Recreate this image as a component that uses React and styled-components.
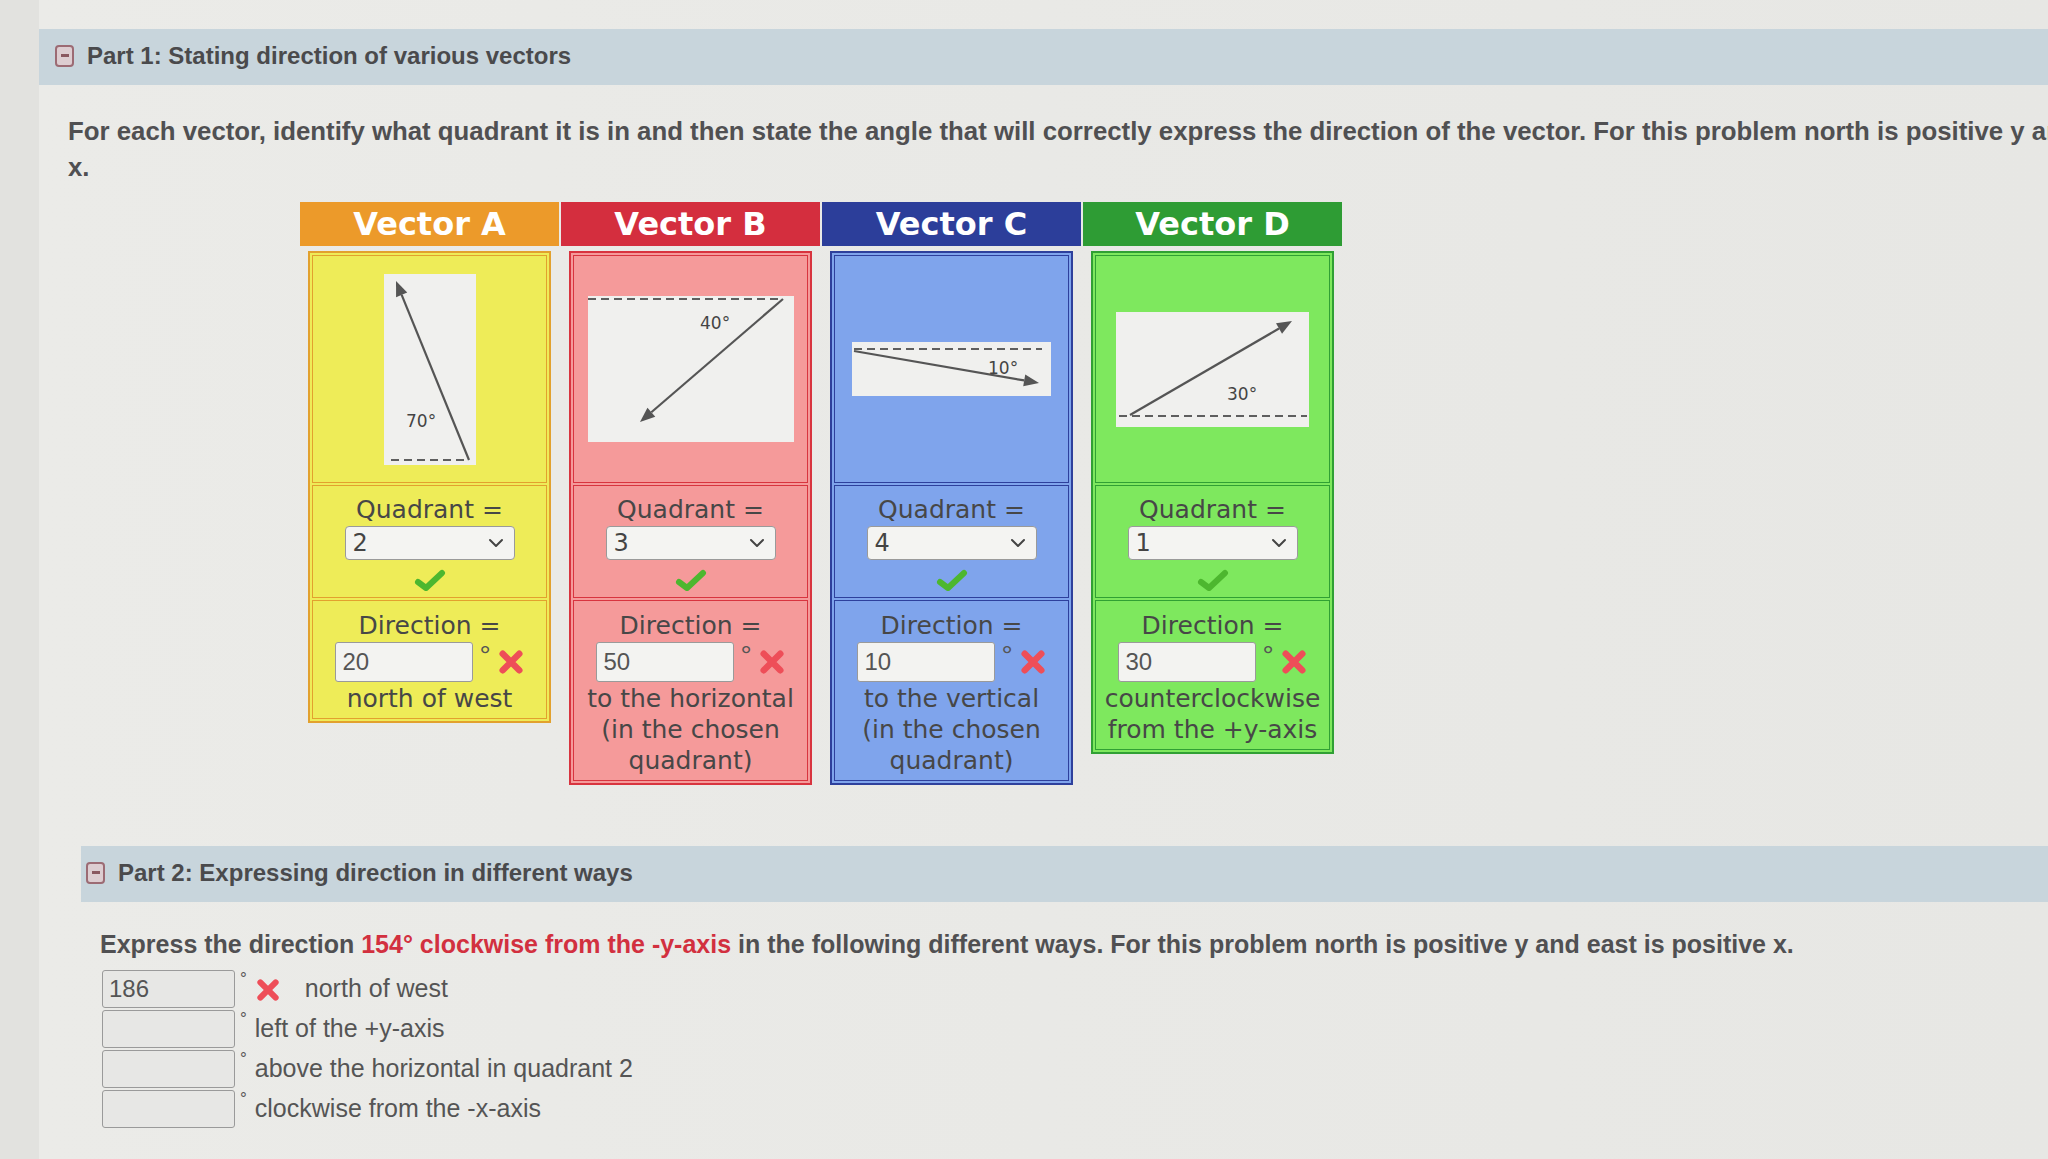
import React from 'react';
import styled, { createGlobalStyle } from 'styled-components';

const GlobalStyle = createGlobalStyle`
  html, body {
    margin: 0;
    padding: 0;
    overflow: hidden;
    background: #e8e8e5;
  }
  body {
    width: 2048px;
    height: 1159px;
    font-family: "Liberation Sans", Arial, sans-serif;
  }
`;

const vectors = [
  {
    name: 'Vector A', head: '#ec9a2a', border: '#e2a12e', fill: '#eeec58',
    pic: { w: 92, h: 191, dash: [7, 186, 85, 186], from: [85, 186], to: [12, 7], label: '70°', lx: 22, ly: 153 },
    quadrant: '2', dir: '20', text: ['north of west'],
  },
  {
    name: 'Vector B', head: '#d42e3e', border: '#d8343f', fill: '#f59a9a',
    pic: { w: 206, h: 146, dash: [0, 3, 195, 3], from: [195, 3], to: [52, 126], label: '40°', lx: 112, ly: 33 },
    quadrant: '3', dir: '50', text: ['to the horizontal', '(in the chosen', 'quadrant)'],
  },
  {
    name: 'Vector C', head: '#2c3e9a', border: '#2e409c', fill: '#7fa4ec',
    pic: { w: 199, h: 54, dash: [2, 7, 190, 7], from: [2, 9], to: [187, 41], label: '10°', lx: 136, ly: 32 },
    quadrant: '4', dir: '10', text: ['to the vertical', '(in the chosen', 'quadrant)'],
  },
  {
    name: 'Vector D', head: '#2e9c34', border: '#30a034', fill: '#7ee85e',
    pic: { w: 193, h: 115, dash: [3, 104, 191, 104], from: [14, 103], to: [176, 9], label: '30°', lx: 111, ly: 88 },
    quadrant: '1', dir: '30', text: ['counterclockwise', 'from the +y-axis'],
  },
];

const part2Rows = [
  { value: '186', wrong: true, label: 'north of west' },
  { value: '', label: 'left of the +y-axis' },
  { value: '', label: 'above the horizontal in quadrant 2' },
  { value: '', label: 'clockwise from the -x-axis' },
];

const Page = styled.div`
  box-sizing: border-box;
  height: 1159px;
  padding: 29px 0 0 39px;
  background: linear-gradient(to right, #e2e2df 0, #e2e2df 39px, #ebebe8 39px, #e7e7e4 100%);
`;

const PartHeader = styled.div`
  display: flex;
  align-items: center;
  gap: 13px;
  height: 56px;
  padding-left: ${p => p.$indent}px;
  padding-bottom: 3px;
  box-sizing: border-box;
  background: #c8d5dc;
  color: #4a4a4c;
  font-weight: bold;
  font-size: 24px;
  white-space: nowrap;
`;

const Toggle = styled.span`
  box-sizing: border-box;
  width: 19px;
  height: 22px;
  border: 2px solid #9c6b74;
  border-radius: 4px;
  background: #ddcdd1;
  display: flex;
  align-items: center;
  justify-content: center;
  &::after {
    content: "";
    width: 8px;
    height: 3px;
    background: #8a5860;
  }
`;

const Intro = styled.p`
  margin: 28px 0 0;
  padding-left: 29px;
  font-size: 25.8px;
  font-weight: bold;
  line-height: 36px;
  color: #505052;
  white-space: nowrap;
`;

const Table = styled.div`
  display: flex;
  align-items: flex-start;
  gap: 2px;
  margin: 17px 0 0 261px;
`;

const Column = styled.div`
  width: 259px;
  display: flex;
  flex-direction: column;
  align-items: center;
`;

const ColHead = styled.div`
  align-self: stretch;
  height: 44px;
  background: ${p => p.$color};
  color: #ffffff;
  font-family: "DejaVu Sans", Verdana, sans-serif;
  font-weight: bold;
  font-size: 32px;
  display: flex;
  align-items: center;
  justify-content: center;
`;

const Panel = styled.div`
  box-sizing: border-box;
  width: 243px;
  margin-top: 5px;
  border: 2px solid ${p => p.$border};
  background: ${p => p.$fill};
  padding: 2px;
  display: flex;
  flex-direction: column;
  gap: 2px;
  font-family: "DejaVu Sans", Verdana, sans-serif;
  font-size: 25px;
  color: #474747;
  text-align: center;
`;

const Cell = styled.div`
  border: 1.5px solid ${p => p.$border};
  display: flex;
  flex-direction: column;
  align-items: center;
`;

const PicCell = styled(Cell)`
  height: 226px;
  justify-content: center;
`;

const QuadCell = styled(Cell)`
  padding: 7px 0 2px;
`;

const DirCell = styled(Cell)`
  padding: 8px 0 4px;
`;

const Label = styled.div`
  line-height: 33px;
`;

const Line = styled.div`
  line-height: 31px;
  white-space: nowrap;
`;

const SelectBox = styled.div`
  box-sizing: border-box;
  width: 170px;
  height: 34px;
  border: 1px solid #9a9a9a;
  border-radius: 4px;
  background: #f4f4f2;
  display: flex;
  align-items: center;
  justify-content: space-between;
  padding: 0 10px 0 7px;
  color: #444;
  font-size: 24px;
`;

const Mark = styled.div`
  height: 30px;
  margin-top: 5px;
  display: flex;
  align-items: center;
`;

const AnswerRow = styled.div`
  display: flex;
  align-items: flex-start;
  margin-bottom: 1px;
`;

const NumberBox = styled.div`
  box-sizing: border-box;
  width: ${p => p.$w}px;
  height: ${p => p.$h}px;
  border: 1.5px solid #9a9a9a;
  border-radius: 3px;
  background: ${p => p.$bg};
  padding-left: 6px;
  display: flex;
  align-items: center;
  font-family: "Liberation Sans", Arial, sans-serif;
  font-size: 24px;
  color: #555;
  text-align: left;
`;

const Deg = styled.span`
  font-family: "Liberation Sans", Arial, sans-serif;
  font-size: ${p => p.$size}px;
  line-height: 1;
  margin: 0 0 0 ${p => p.$gap}px;
  color: #555;
`;

const WrongIcon = styled.span`
  display: flex;
  margin: ${p => p.$top}px 0 0 ${p => p.$gap}px;
`;

const Part2 = styled.section`
  margin: 61px 0 0 42px;
`;

const Prompt = styled.p`
  margin: 24px 0 0;
  padding-left: 19px;
  font-size: 25px;
  font-weight: bold;
  line-height: 36px;
  color: #505052;
  white-space: nowrap;
`;

const Red = styled.span`
  color: #d2303f;
`;

const Answers = styled.div`
  margin: 8px 0 0 21px;
  display: flex;
  flex-direction: column;
  gap: 2px;
`;

const Row = styled.div`
  display: flex;
  align-items: flex-start;
  height: 38px;
`;

const RowLabel = styled.span`
  margin-left: ${p => p.$gap}px;
  line-height: 36px;
  font-size: 25px;
  color: #555;
  white-space: nowrap;
`;

const Check = () => (
  <svg width="32" height="25" viewBox="0 0 32 25">
    <path d="M4 14 L12 20 L28 5" fill="none" stroke="#4db72f" strokeWidth="6" strokeLinecap="round" strokeLinejoin="round" />
  </svg>
);

const Cross = ({ size = 22 }) => (
  <svg width={size} height={size} viewBox="0 0 22 22">
    <path d="M4 4 L18 18 M18 4 L4 18" fill="none" stroke="#ee4e58" strokeWidth="5.5" strokeLinecap="round" />
  </svg>
);

const Chevron = () => (
  <svg width="16" height="10" viewBox="0 0 16 10">
    <path d="M2 2 L8 8 L14 2" fill="none" stroke="#444" strokeWidth="2" strokeLinecap="round" strokeLinejoin="round" />
  </svg>
);

const Diagram = ({ pic }) => {
  const [x1, y1] = pic.from;
  const [x2, y2] = pic.to;
  const len = Math.hypot(x2 - x1, y2 - y1);
  const ux = (x2 - x1) / len;
  const uy = (y2 - y1) / len;
  const hl = 15;
  const hw = 6;
  const bx = x2 - ux * hl;
  const by = y2 - uy * hl;
  const head = `${x2},${y2} ${bx - uy * hw},${by + ux * hw} ${bx + uy * hw},${by - ux * hw}`;
  const [dx1, dy1, dx2, dy2] = pic.dash;
  return (
    <svg width={pic.w} height={pic.h} viewBox={`0 0 ${pic.w} ${pic.h}`} style={{ background: '#f0f0ee' }}>
      <line x1={dx1} y1={dy1} x2={dx2} y2={dy2} stroke="#5e5e5e" strokeWidth="2" strokeDasharray="8 5" />
      <line x1={x1} y1={y1} x2={bx} y2={by} stroke="#555" strokeWidth="2.2" />
      <polygon points={head} fill="#555" />
      <text x={pic.lx} y={pic.ly} fontFamily="DejaVu Sans, Verdana, sans-serif" fontSize="17" fill="#444">{pic.label}</text>
    </svg>
  );
};

const VectorColumn = ({ v }) => (
  <Column>
    <ColHead $color={v.head}>{v.name}</ColHead>
    <Panel $border={v.border} $fill={v.fill}>
      <PicCell $border={v.border}>
        <Diagram pic={v.pic} />
      </PicCell>
      <QuadCell $border={v.border}>
        <Label>Quadrant =</Label>
        <SelectBox>
          <span>{v.quadrant}</span>
          <Chevron />
        </SelectBox>
        <Mark><Check /></Mark>
      </QuadCell>
      <DirCell $border={v.border}>
        <Label>Direction =</Label>
        <AnswerRow>
          <NumberBox $w={138} $h={40} $bg="#f3f3f1">{v.dir}</NumberBox>
          <Deg $size={28} $gap={6}>°</Deg>
          <WrongIcon $gap={7} $top={7}><Cross size={26} /></WrongIcon>
        </AnswerRow>
        {v.text.map(t => <Line key={t}>{t}</Line>)}
      </DirCell>
    </Panel>
  </Column>
);

export default function App() {
  return (
    <>
      <GlobalStyle />
      <Page>
        <PartHeader $indent={16}>
          <Toggle />
          Part 1: Stating direction of various vectors
        </PartHeader>
        <Intro>
          For each vector, identify what quadrant it is in and then state the angle that will correctly express the direction of the vector. For this problem north is positive y and east is positive
          <br />
          x.
        </Intro>
        <Table>
          {vectors.map(v => <VectorColumn key={v.name} v={v} />)}
        </Table>
        <Part2>
          <PartHeader $indent={5}>
            <Toggle />
            Part 2: Expressing direction in different ways
          </PartHeader>
          <Prompt>
            Express the direction <Red>154° clockwise from the -y-axis</Red> in the following different ways. For this problem north is positive y and east is positive x.
          </Prompt>
          <Answers>
            {part2Rows.map(r => (
              <Row key={r.label}>
                <NumberBox $w={133} $h={38} $bg="#e7e7e5">{r.value}</NumberBox>
                <Deg $size={17} $gap={5}>°</Deg>
                {r.wrong && <WrongIcon $gap={9} $top={8}><Cross size={24} /></WrongIcon>}
                <RowLabel $gap={r.wrong ? 25 : 8}>{r.label}</RowLabel>
              </Row>
            ))}
          </Answers>
        </Part2>
      </Page>
    </>
  );
}
